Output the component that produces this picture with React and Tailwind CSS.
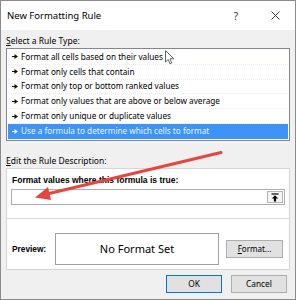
import React from "react";

const rows = [
  "Format all cells based on their values",
  "Format only cells that contain",
  "Format only top or bottom ranked values",
  "Format only values that are above or below average",
  "Format only unique or duplicate values",
  "Use a formula to determine which cells to format",
];

function Pointer({ color }) {
  return (
    <svg width="6" height="5" viewBox="0 0 6 5" className="shrink-0">
      <path d="M0 2h2.5v1H0z M2.5 0l3.5 2.5-3.5 2.5z" fill={color} />
    </svg>
  );
}

const boldFont = { fontFamily: '"Liberation Sans", Arial, sans-serif' };

export default function App() {
  return (
    <div
      className="relative w-[296px] h-[300px] bg-[#f0f0f0] border border-[#8c8c8c] flex flex-col text-black overflow-hidden"
      style={{ fontFamily: '"Noto Sans", "Open Sans", sans-serif' }}
    >
      {/* Title bar */}
      <div className="h-[29px] bg-white flex items-center pl-[6px] shrink-0">
        <span className="text-[9.5px] leading-none">New Formatting Rule</span>
        <span className="ml-auto mr-[33px] text-[10px] leading-none text-[#333]">?</span>
        <svg width="9" height="9" viewBox="0 0 9 9" className="mr-[15px]">
          <path d="M0.5 0.5L8.5 8.5M8.5 0.5L0.5 8.5" stroke="#222" strokeWidth="0.9" />
        </svg>
      </div>

      {/* Body */}
      <div className="flex flex-col px-[5px] pt-[3px] text-[8.5px]">
        <div className="h-[15px] leading-[15px]">
          <u>S</u>elect a Rule Type:
        </div>
        <div className="h-[93px] bg-white border border-[#828790] p-[1px] flex flex-col text-[8.2px]">
          {rows.map((r, i) => {
            const sel = i === rows.length - 1;
            return (
              <div
                key={r}
                className={
                  "h-[15px] flex items-center gap-[3px] pl-[4px] leading-none " +
                  (sel
                    ? "bg-[#3d94f6] text-[#eaf3ff]"
                    : "border-b border-dotted border-[#ececec]")
                }
              >
                <Pointer color={sel ? "#eaf3ff" : "#111"} />
                <span className="whitespace-nowrap">{r}</span>
              </div>
            );
          })}
        </div>

        <div className="mt-[12px] h-[15px] leading-[15px]">
          <u>E</u>dit the Rule Description:
        </div>
        <div className="h-[102px] bg-white border border-[#d5d5d5] flex flex-col">
          <div className="h-[50px] border-b border-[#dcdcdc] px-[4px] pt-[4px] flex flex-col">
            <div
              className="h-[14px] leading-[14px] font-bold text-[8.5px] pl-[1px]"
              style={boldFont}
            >
              Format values where this formula is true:
            </div>
            <div className="mt-[2px] h-[16px] border border-[#abadb3] flex justify-end items-stretch p-[1px]">
              <div className="w-[16px] bg-[#f4f4f4] border border-[#b4b4b4] flex items-center justify-center">
                <svg width="8" height="9" viewBox="0 0 8 9">
                  <path d="M0.5 1h7" stroke="#000" strokeWidth="1.2" />
                  <path d="M4 2.3L7.2 5.5H5.1v3H2.9v-3H0.8z" fill="#000" />
                </svg>
              </div>
            </div>
          </div>
          <div className="flex items-start px-[5px] pt-[14px]">
            <div
              className="w-[43px] h-[32px] flex items-center font-bold text-[8.3px]"
              style={boldFont}
            >
              Preview:
            </div>
            <div className="w-[164px] h-[32px] border border-[#a0a0a0] flex items-center justify-center text-[11px]">
              No Format Set
            </div>
            <div className="ml-[7px] mt-[7px] w-[57px] h-[18px] bg-[#e1e1e1] border border-[#adadad] flex items-center justify-center text-[8px]">
              <span>
                <u>F</u>ormat...
              </span>
            </div>
          </div>
        </div>

        <div className="mt-[5px] flex justify-end gap-[9px] pr-[3px]">
          <div className="w-[56px] h-[18px] bg-[#e1e1e1] border border-[#0078d7] flex items-center justify-center text-[8.3px]">
            OK
          </div>
          <div className="w-[56px] h-[18px] bg-[#e1e1e1] border border-[#adadad] flex items-center justify-center text-[8.3px]">
            Cancel
          </div>
        </div>
      </div>

      {/* Red annotation arrow */}
      <svg
        className="absolute left-0 top-0 pointer-events-none"
        width="296"
        height="300"
        viewBox="0 0 296 300"
      >
        <path d="M220 151.5L46 193" stroke="#e8453f" strokeWidth="3" strokeLinecap="round" />
        <path d="M34 196.5L47 186L50 199z" fill="#e8453f" />
      </svg>

      {/* Mouse cursor */}
      <svg
        className="absolute left-[164px] top-[49px] pointer-events-none"
        width="10"
        height="15"
        viewBox="0 0 10 15"
      >
        <path
          d="M0.5 0.5V12L3.2 9.5L5 13.8L6.8 13L5 8.8H8.8z"
          fill="#fff"
          stroke="#555"
          strokeWidth="0.9"
          strokeLinejoin="round"
        />
      </svg>
    </div>
  );
}
